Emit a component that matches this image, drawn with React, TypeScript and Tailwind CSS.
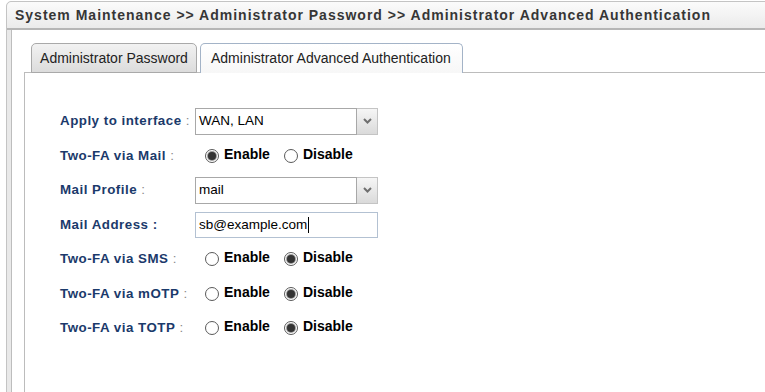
import React from 'react';

const Radio: React.FC<{ checked?: boolean }> = ({ checked }) => (
  <span className="flex h-[14px] w-[14px] shrink-0 items-center justify-center rounded-full border border-[#5a5a5a] bg-white">
    {checked && <span className="h-[8px] w-[8px] rounded-full bg-[#333] shadow-[0_0_0_1px_#9a9a9a]" />}
  </span>
);

const RadioPair: React.FC<{ enabled: boolean }> = ({ enabled }) => (
  <div className="ml-[10px] flex items-center text-[14px] font-bold text-black">
    <Radio checked={enabled} />
    <span className="ml-[5px] -mt-[3px]">Enable</span>
    <span className="ml-[14px]">
      <Radio checked={!enabled} />
    </span>
    <span className="ml-[5px] -mt-[3px]">Disable</span>
  </div>
);

const SelectBox: React.FC<{ value: string }> = ({ value }) => (
  <div className="flex h-[27px] w-[183px]">
    <div className="flex flex-1 items-center border border-[#a8a8a8] bg-white pl-[3px] text-[13.5px] text-black">
      {value}
    </div>
    <div className="flex w-[21px] items-center justify-center border border-l-0 border-[#c4c4c4] bg-gradient-to-b from-[#f6f6f6] to-[#dadada]">
      <svg width="9" height="6" viewBox="0 0 9 6">
        <path d="M1 1 L4.5 4.5 L8 1" fill="none" stroke="#6f6f6f" strokeWidth="2" />
      </svg>
    </div>
  </div>
);

const Row: React.FC<{ label: string; colon?: 'light' | 'bold'; children: React.ReactNode }> = ({ label, colon = 'light', children }) => (
  <div className="flex h-[34.5px] items-center">
    <div className="w-[135px] shrink-0 text-[13.33px] tracking-[0.5px] text-[#1b3a6b]">
      <span className="font-bold">{label}</span>
      {colon === 'light' ? (
        <span className="text-[#8a8a8a]"> :</span>
      ) : (
        <span className="font-bold"> :</span>
      )}
    </div>
    {children}
  </div>
);

export default function App() {
  return (
    <div className="h-[392px] w-[765px] overflow-hidden bg-white font-['Liberation_Sans',Arial,sans-serif]">
      <div className="ml-[6px] mt-[1px] h-[420px] w-[800px] rounded-tl-[5px] border border-[#c4c4c4] bg-[#e9e9e9]">
        <div className="flex h-[28px] items-center rounded-tl-[5px] border-b-2 border-[#b6b6b6] bg-gradient-to-b from-[#fbfbfb] to-[#ebebeb] pl-[8px] text-[14px] font-bold tracking-[1px] text-[#363636]">
          System Maintenance &gt;&gt; Administrator Password &gt;&gt; Administrator Advanced Authentication
        </div>
        <div className="ml-[4px] h-full border-l border-[#bdbdbd] bg-white pl-[12px] pt-[13px]">
          <div className="ml-[7px] flex items-end gap-[3px]">
            <div className="-mb-px flex h-[30px] w-[166px] items-center justify-center rounded-t-[5px] border border-[#a9a9a9] bg-gradient-to-b from-[#f2f2f2] to-[#dcdcdc] text-[14px] text-[#222]">
              Administrator Password
            </div>
            <div className="-mb-px flex h-[30px] w-[263px] items-center rounded-t-[5px] border border-b-0 border-[#a3b3c7] bg-gradient-to-b from-white to-[#f7f7f7] pl-[10px] text-[14px] text-[#222]">
              Administrator Advanced Authentication
            </div>
          </div>
          <div className="h-[400px] border-l border-t border-[#bcbcbc] pl-[35px] pt-[31px]">
            <Row label="Apply to interface">
              <SelectBox value="WAN, LAN" />
            </Row>
            <Row label="Two-FA via Mail">
              <RadioPair enabled />
            </Row>
            <Row label="Mail Profile">
              <SelectBox value="mail" />
            </Row>
            <Row label="Mail Address" colon="bold">
              <div className="flex h-[26px] w-[183px] items-center border border-[#b3c1d2] bg-white pl-[3px] text-[13.5px] text-black">
                sb@example.com
                <span className="ml-px h-[16px] w-px bg-black" />
              </div>
            </Row>
            <Row label="Two-FA via SMS">
              <RadioPair enabled={false} />
            </Row>
            <Row label="Two-FA via mOTP">
              <RadioPair enabled={false} />
            </Row>
            <Row label="Two-FA via TOTP">
              <RadioPair enabled={false} />
            </Row>
          </div>
        </div>
      </div>
    </div>
  );
}
